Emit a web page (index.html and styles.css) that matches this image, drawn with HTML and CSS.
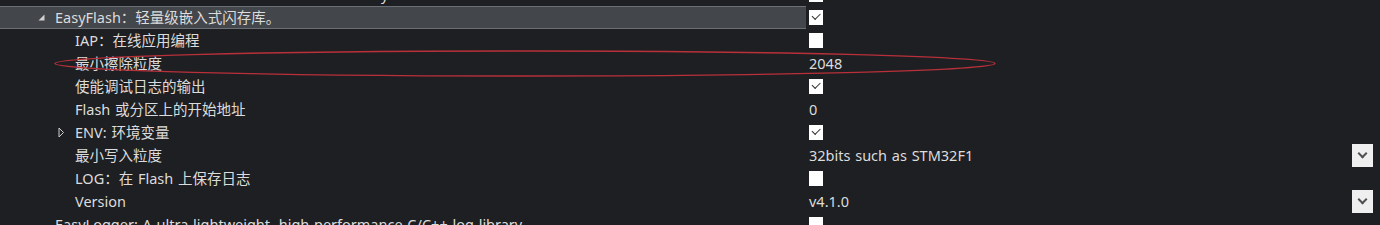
FILE: index.html
```html
<!DOCTYPE html>
<html>
<head>
<meta charset="utf-8">
<title>RT-Thread Settings</title>
<link rel="stylesheet" href="styles.css">
</head>
<body>
    <div class="tree">
        <div class="row prev">
            <div class="name lvl1"><span class="arrow"></span>CmBacktrace: Advanced fault backtrace C library</div>
            <div class="value"><span class="check"></span></div>
        </div>

        <div class="row">
            <div class="name lvl1 selected">
                <span class="arrow"><svg width="7" height="7" viewBox="0 0 7 7"><polygon points="6.5,0.5 6.5,6.5 0.5,6.5" fill="#d0d0d0"/></svg></span>EasyFlash：轻量级嵌入式闪存库。
            </div>
            <div class="value"><span class="check on"></span></div>
        </div>
        <div class="row">
            <div class="name lvl2"><span class="arrow"></span>IAP：在线应用编程</div>
            <div class="value"><span class="check"></span></div>
        </div>
        <div class="row">
            <div class="name lvl2"><span class="arrow"></span>最小擦除粒度</div>
            <div class="value"><span class="text">2048</span></div>
        </div>
        <div class="row">
            <div class="name lvl2"><span class="arrow"></span>使能调试日志的输出</div>
            <div class="value"><span class="check on"></span></div>
        </div>
        <div class="row">
            <div class="name lvl2"><span class="arrow"></span>Flash 或分区上的开始地址</div>
            <div class="value"><span class="text">0</span></div>
        </div>
        <div class="row">
            <div class="name lvl2">
                <span class="arrow"><svg width="7" height="11" viewBox="0 0 7 11"><polygon points="1,1 5.5,5.5 1,10" fill="none" stroke="#d0d0d0" stroke-width="1"/></svg></span>ENV: 环境变量
            </div>
            <div class="value"><span class="check on"></span></div>
        </div>
        <div class="row">
            <div class="name lvl2"><span class="arrow"></span>最小写入粒度</div>
            <div class="value"><span class="text">32bits such as STM32F1</span><span class="drop"></span></div>
        </div>
        <div class="row">
            <div class="name lvl2"><span class="arrow"></span>LOG：在 Flash 上保存日志</div>
            <div class="value"><span class="check"></span></div>
        </div>
        <div class="row">
            <div class="name lvl2"><span class="arrow"></span>Version</div>
            <div class="value"><span class="text">v4.1.0</span><span class="drop"></span></div>
        </div>
        <div class="row">
            <div class="name lvl1"><span class="arrow"></span>EasyLogger: A ultra-lightweight, high-performance C/C++ log library</div>
            <div class="value"><span class="check"></span></div>
        </div>

        <svg class="mark" width="1380" height="225" viewBox="0 0 1380 225">
            <ellipse cx="525" cy="63.5" rx="470" ry="12.5" fill="none" stroke="#b8303a" stroke-width="1.4"/>
        </svg>
    </div>
</body>
</html>
```

FILE: styles.css
```css
body {
    margin: 0;
    background-color: #1e1f22;
    color: #dcdcdc;
    font-family: "Noto Sans", "Noto Sans CJK SC", sans-serif;
    font-size: 14.5px;
    word-spacing: 1px;
    overflow: hidden;
}

.tree {
    position: relative;
    height: 225px;
    overflow: hidden;
}

.row {
    display: grid;
    grid-template-columns: 806px 1fr;
    height: 23px;
}

.row.prev {
    margin-top: -17px;
}

.name {
    display: flex;
    align-items: center;
    box-sizing: border-box;
    height: 23px;
    white-space: nowrap;
    line-height: 1;
}

.name.lvl1 {
    padding-left: 38px;
}

.name.lvl2 {
    padding-left: 58px;
}

.name.selected {
    background-color: #43464b;
    border-top: 1px solid #6c6f74;
    border-bottom: 1px solid #6c6f74;
}

.arrow {
    display: flex;
    align-items: center;
    width: 17px;
    height: 23px;
    flex-shrink: 0;
}

.value {
    display: flex;
    align-items: center;
    justify-content: space-between;
    padding-left: 3px;
    padding-right: 7px;
}

.check {
    position: relative;
    display: block;
    width: 14px;
    height: 15px;
    background-color: #ffffff;
}

.check.on::after {
    content: "";
    position: absolute;
    left: 3px;
    top: 3px;
    width: 7px;
    height: 3.5px;
    border-left: 1.5px solid #333;
    border-bottom: 1.5px solid #333;
    transform: rotate(-45deg);
    transform-origin: center;
}

.text {
    line-height: 1;
}

.drop {
    position: relative;
    display: block;
    width: 21px;
    height: 23px;
    background-color: #efefef;
}

.drop::after {
    content: "";
    position: absolute;
    left: 7px;
    top: 6px;
    width: 5px;
    height: 5px;
    border-right: 2px solid #505050;
    border-bottom: 2px solid #505050;
    transform: rotate(45deg);
}

.mark {
    position: absolute;
    left: 0;
    top: 0;
    pointer-events: none;
}
```
